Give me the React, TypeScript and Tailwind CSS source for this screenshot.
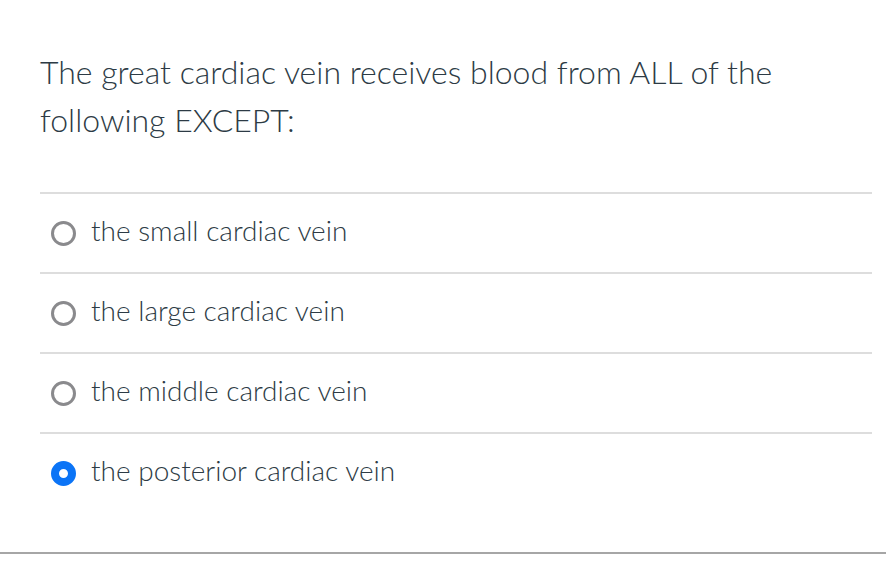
import React from "react";

const options = [
  { label: "the small cardiac vein", selected: false },
  { label: "the large cardiac vein", selected: false },
  { label: "the middle cardiac vein", selected: false },
  { label: "the posterior cardiac vein", selected: true },
];

function Radio({ selected }: { selected: boolean }) {
  if (selected) {
    return <span className="block h-[25px] w-[25px] shrink-0 rounded-full border-[8px] border-[#0b74f6] bg-white" />;
  }
  return <span className="block h-[25px] w-[25px] shrink-0 rounded-full border-[3px] border-[#8a8a8d] bg-white" />;
}

export default function App() {
  return (
    <div className="h-[572px] w-[886px] overflow-hidden bg-white font-['Lato','Liberation_Sans',sans-serif] font-light text-[#2d3b45]">
      <div className="pl-[40px] pr-[14px] pt-[48px]">
        <p className="text-[32px] leading-[48px]">
          The great cardiac vein receives blood from ALL of the
          <br />
          following EXCEPT:
        </p>
        <ul className="mt-[48px]">
          {options.map((opt) => (
            <li key={opt.label} className="flex h-[80px] items-center gap-[15px] border-t-2 border-[#dddddd] pl-[11px]">
              <Radio selected={opt.selected} />
              <span className="mb-[7px] text-[28px] leading-none">{opt.label}</span>
            </li>
          ))}
        </ul>
      </div>
      <div className="mt-[40px] h-[2px] w-full bg-[#a6a6a6]" />
    </div>
  );
}
